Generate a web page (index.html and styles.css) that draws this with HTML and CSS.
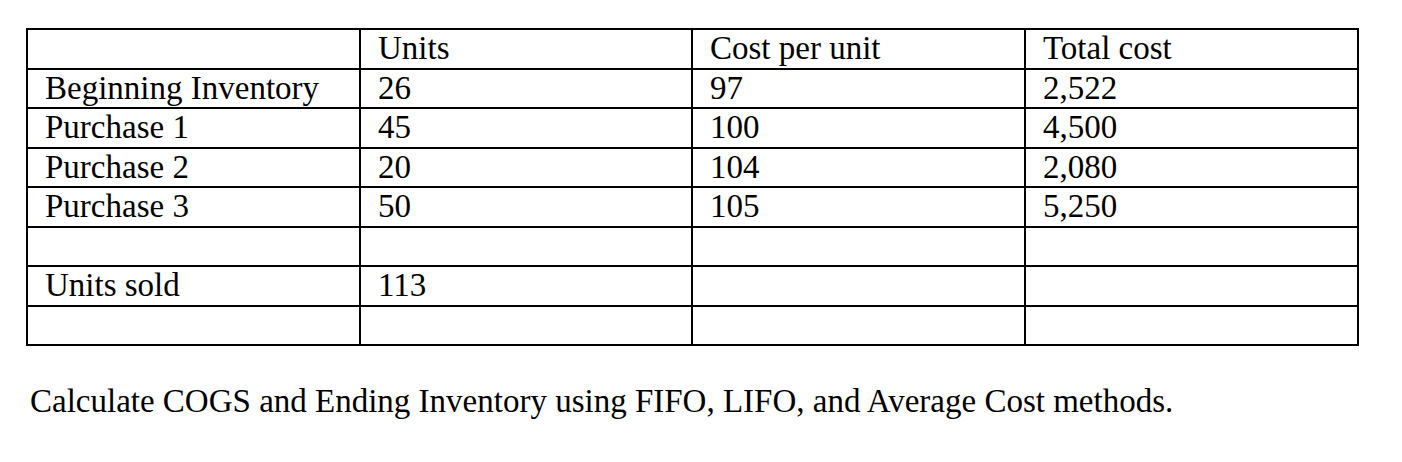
FILE: index.html
```html
<!DOCTYPE html>
<html>
<head>
<meta charset="utf-8">
<link rel="stylesheet" href="styles.css">
</head>
<body>
<div class="page">
  <table class="inv">
    <colgroup>
      <col class="c1"><col class="c2"><col class="c3"><col class="c4">
    </colgroup>
    <tr><td></td><td>Units</td><td>Cost per unit</td><td>Total cost</td></tr>
    <tr><td>Beginning Inventory</td><td>26</td><td>97</td><td>2,522</td></tr>
    <tr><td>Purchase 1</td><td>45</td><td>100</td><td>4,500</td></tr>
    <tr><td>Purchase 2</td><td>20</td><td>104</td><td>2,080</td></tr>
    <tr><td>Purchase 3</td><td>50</td><td>105</td><td>5,250</td></tr>
    <tr><td></td><td></td><td></td><td></td></tr>
    <tr><td>Units sold</td><td>113</td><td></td><td></td></tr>
    <tr><td></td><td></td><td></td><td></td></tr>
  </table>
  <p class="question">Calculate COGS and Ending Inventory using FIFO, LIFO, and Average Cost methods.</p>
</div>
</body>
</html>
```

FILE: styles.css
```css
html, body {
  margin: 0;
  background: #fff;
}
.page {
  padding: 28px 0 0 26px;
  font-family: "Liberation Serif", "Times New Roman", serif;
  color: #000;
}
.inv {
  border-collapse: collapse;
  table-layout: fixed;
  width: 1331px;
}
.inv .c1, .inv .c3, .inv .c4 {
  width: 333px;
}
.inv .c2 {
  width: 332px;
}
.inv td {
  border: 2px solid #000;
  height: 37.5px;
  padding: 0 0 0 17px;
  font-size: 33px;
  line-height: 37.5px;
  vertical-align: top;
  white-space: nowrap;
}
.question {
  margin: 35px 0 0 4px;
  font-size: 33px;
  line-height: 40px;
}
```
